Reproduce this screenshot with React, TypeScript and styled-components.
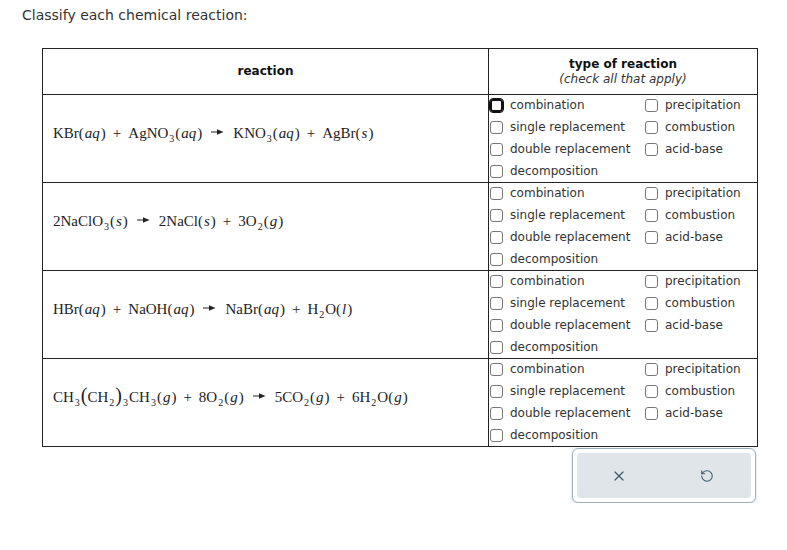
import React from 'react';
import styled, { createGlobalStyle } from 'styled-components';
import { X, RotateCcw } from 'lucide-react';

const GlobalStyle = createGlobalStyle`
  body {
    margin: 0;
    background: #fff;
    font-family: "DejaVu Sans", Verdana, sans-serif;
    color: #222;
  }
`;

const Page = styled.div`
  width: 787px;
  padding: 5px 0 0 22px;
  box-sizing: border-box;
`;

const Title = styled.div`
  font-size: 14px;
  line-height: 20px;
  color: #333;
`;

const Sheet = styled.div`
  margin: 23px 0 0 20px;
  width: 713px;
`;

const Table = styled.table`
  width: 713px;
  border-collapse: collapse;
  table-layout: fixed;
`;

const HeadCell = styled.th<{ $w: number }>`
  width: ${p => p.$w}px;
  height: 45px;
  border: 1px solid #222;
  font-size: 12px;
  font-weight: bold;
  line-height: 15px;
  color: #111;
  padding: 0;
  text-align: center;
`;

const Hint = styled.div`
  font-weight: normal;
  font-style: italic;
  color: #333;
`;

const EqCell = styled.td`
  border: 1px solid #222;
  padding: 0 0 9px 10px;
  vertical-align: middle;
`;

const OptCell = styled.td`
  border: 1px solid #222;
  padding: 0 0 0 1px;
  vertical-align: top;
  height: 87px;
`;

const Equation = styled.div`
  font-family: "Liberation Serif", "Times New Roman", serif;
  font-size: 15px;
  line-height: 20px;
  color: #222;
  white-space: nowrap;
`;

const Sub = styled.span`
  font-size: 10px;
  position: relative;
  top: 4px;
  margin: 0 1px;
`;

const It = styled.i`
  font-style: italic;
  padding: 0 1px;
`;

const Op = styled.span`
  margin: 0 7px;
`;

const Big = styled.span`
  font-size: 20px;
  line-height: 0;
`;

const ArrowSvg = styled.svg`
  margin: 0 9px;
  vertical-align: 2px;
`;

const Arrow = () => (
  <ArrowSvg width="13" height="8" viewBox="0 0 13 8">
    <line x1="0" y1="4" x2="8" y2="4" stroke="#222" strokeWidth="1" />
    <path d="M6 1.2 L12.5 4 L6 6.8 Z" fill="#222" />
  </ArrowSvg>
);

const Options = styled.div`
  display: grid;
  grid-template-columns: 155px 1fr;
  grid-auto-rows: 22px;
  margin-top: -1px;
`;

const Option = styled.label`
  display: flex;
  align-items: center;
  font-size: 12px;
  color: #333;
  white-space: nowrap;
`;

const Box = styled.span<{ $focused?: boolean }>`
  width: 13px;
  height: 13px;
  box-sizing: border-box;
  border: ${p => (p.$focused ? '2px solid #111' : '1px solid #777')};
  border-radius: 3px;
  margin: 0 7px 0 0;
  background: #fff;
  outline: ${p => (p.$focused ? '1px solid #111' : 'none')};
  flex-shrink: 0;
`;

const Actions = styled.div`
  display: flex;
  justify-content: flex-end;
  margin: 1px -1px 0 0;
`;

const ActionFrame = styled.div`
  width: 184px;
  height: 55px;
  box-sizing: border-box;
  border: 1px solid #9bb0bb;
  border-radius: 6px;
  background: #fff;
  padding: 4px;
  box-shadow: 0 2px 4px rgba(0, 0, 0, 0.12);
`;

const ActionBar = styled.div`
  height: 100%;
  background: #dfe5e8;
  border-radius: 4px;
  display: flex;
  align-items: center;
  justify-content: space-between;
  padding: 0 37px 0 34px;
  color: #3f5b69;
`;

const left = ['combination', 'single replacement', 'double replacement', 'decomposition'];
const right = ['precipitation', 'combustion', 'acid-base'];

const Choices = ({ focusFirst }: { focusFirst?: boolean }) => {
  const cells: React.ReactNode[] = [];
  for (let i = 0; i < 4; i++) {
    cells.push(
      <Option key={'l' + i}>
        <Box $focused={focusFirst && i === 0} />
        {left[i]}
      </Option>
    );
    cells.push(
      right[i] ? (
        <Option key={'r' + i}>
          <Box />
          {right[i]}
        </Option>
      ) : (
        <span key={'r' + i} />
      )
    );
  }
  return <Options>{cells}</Options>;
};

const reactions: React.ReactNode[] = [
  <Equation>
    KBr(<It>aq</It>)<Op>+</Op>AgNO<Sub>3</Sub>(<It>aq</It>)<Arrow />KNO<Sub>3</Sub>(<It>aq</It>)<Op>+</Op>AgBr(<It>s</It>)
  </Equation>,
  <Equation>
    2NaClO<Sub>3</Sub>(<It>s</It>)<Arrow />2NaCl(<It>s</It>)<Op>+</Op>3O<Sub>2</Sub>(<It>g</It>)
  </Equation>,
  <Equation>
    HBr(<It>aq</It>)<Op>+</Op>NaOH(<It>aq</It>)<Arrow />NaBr(<It>aq</It>)<Op>+</Op>H<Sub>2</Sub>O(<It>l</It>)
  </Equation>,
  <Equation>
    CH<Sub>3</Sub><Big>(</Big>CH<Sub>2</Sub><Big>)</Big><Sub>3</Sub>CH<Sub>3</Sub>(<It>g</It>)<Op>+</Op>8O<Sub>2</Sub>(<It>g</It>)<Arrow />5CO<Sub>2</Sub>(<It>g</It>)<Op>+</Op>6H<Sub>2</Sub>O(<It>g</It>)
  </Equation>,
];

export default function App() {
  return (
    <Page>
      <GlobalStyle />
      <Title>Classify each chemical reaction:</Title>
      <Sheet>
        <Table>
          <thead>
            <tr>
              <HeadCell $w={445}>reaction</HeadCell>
              <HeadCell $w={268}>
                type of reaction
                <Hint>(check all that apply)</Hint>
              </HeadCell>
            </tr>
          </thead>
          <tbody>
            {reactions.map((eq, i) => (
              <tr key={i}>
                <EqCell>{eq}</EqCell>
                <OptCell>
                  <Choices focusFirst={i === 0} />
                </OptCell>
              </tr>
            ))}
          </tbody>
        </Table>
        <Actions>
          <ActionFrame>
            <ActionBar>
              <X size={16} strokeWidth={1.8} />
              <RotateCcw size={14} strokeWidth={1.8} />
            </ActionBar>
          </ActionFrame>
        </Actions>
      </Sheet>
    </Page>
  );
}
